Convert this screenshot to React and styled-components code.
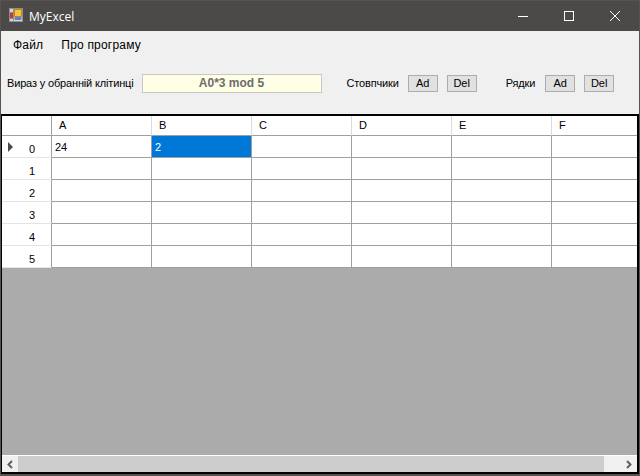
import React from "react";
import styled, { createGlobalStyle } from "styled-components";

const Global = createGlobalStyle`
  html, body { margin: 0; padding: 0; background: #000; }
  #root { width: 640px; height: 476px; overflow: hidden; }
  * { box-sizing: border-box; }
`;

const Win = styled.div`
  width: 640px;
  height: 476px;
  display: flex;
  flex-direction: column;
  background: #f0f0f0;
  border: 1px solid #57544f;
  border-bottom-width: 2px;
  font-family: "Liberation Sans", Arial, sans-serif;
  font-size: 11px;
  color: #000;
  overflow: hidden;
`;

const TitleBar = styled.div`
  height: 30px;
  flex: none;
  background: #4c4a48;
  display: flex;
  align-items: center;
  padding: 0 1px 0 8px;
  color: #fff;
  font-family: "Open Sans", "Noto Sans", sans-serif;
  font-size: 12px;
`;

const IconSvg = styled.svg`
  margin-bottom: 2px;
  flex: none;
`;

const Title = styled.span`
  margin-left: 6px;
  flex: 1;
`;

const WinBtn = styled.div`
  width: 46px;
  height: 30px;
  display: flex;
  align-items: center;
  justify-content: center;
`;

const Menu = styled.div`
  height: 27px;
  flex: none;
  display: flex;
  align-items: center;
  padding-left: 12px;
  gap: 18px;
  font-size: 12px;
  letter-spacing: 0.2px;
  background: #f0f0f0;
`;

const Toolbar = styled.div`
  height: 56px;
  flex: none;
  display: flex;
  align-items: flex-start;
  padding: 16px 0 0 6px;
`;

const Label = styled.span`
  line-height: 19px;
  font-size: 11px;
  letter-spacing: -0.16px;
  margin-left: ${(p) => p.$ml || 0}px;
`;

const ExprBox = styled.div`
  width: 180px;
  height: 19px;
  margin-left: 8px;
  background: #ffffe6;
  border: 1px solid #c8c8c8;
  color: #6d6d6d;
  font-weight: bold;
  font-size: 12px;
  text-align: center;
  line-height: 17px;
`;

const Btn = styled.button`
  width: 30px;
  height: 17px;
  padding: 0;
  margin: 1px 0 0 ${(p) => p.$ml}px;
  border: 1px solid #adadad;
  background: #e1e1e1;
  font: 11px "Liberation Sans", Arial, sans-serif;
  line-height: 15px;
  color: #000;
`;

const GridFrame = styled.div`
  flex: 1;
  min-height: 0;
  border: 1px solid #000;
  border-top-width: 2px;
  border-right-width: 2px;
  border-bottom-width: 2px;
  background: #ababab;
  display: flex;
  flex-direction: column;
`;

const GridArea = styled.div`
  flex: 1;
  min-height: 0;
  overflow: hidden;
`;

const Table = styled.div`
  display: grid;
  grid-template-columns: 50px repeat(6, 100px);
  grid-template-rows: 20px repeat(6, 22px);
  width: 650px;
`;

const HeadCell = styled.div`
  background: #fff;
  border-right: 1px solid ${(p) => (p.$corner ? "#a0a0a0" : "#dcdcdc")};
  border-bottom: 1px solid #a0a0a0;
  padding-left: 7px;
  line-height: 19px;
  color: #000;
`;

const RowHead = styled.div`
  position: relative;
  background: #fff;
  border-right: 1px solid #a0a0a0;
  border-bottom: 1px solid #e4e4e4;
  display: flex;
  align-items: center;
  justify-content: flex-end;
  padding: 4px 16px 0 0;
`;

const Arrow = styled.span`
  position: absolute;
  left: 6px;
  top: 6px;
  width: 0;
  height: 0;
  border-left: 5px solid #4a4a4a;
  border-top: 5px solid transparent;
  border-bottom: 5px solid transparent;
`;

const Cell = styled.div`
  background: ${(p) => (p.$sel ? "#0078d7" : "#fff")};
  color: ${(p) => (p.$sel ? "#fff" : "#000")};
  border-right: 1px solid #a0a0a0;
  border-bottom: 1px solid #a0a0a0;
  padding: 5px 0 0 3px;
  line-height: 13px;
`;

const HScroll = styled.div`
  height: 17px;
  flex: none;
  background: #f0f0f0;
  border-top: 1px solid #fff;
  display: flex;
  align-items: stretch;
`;

const ScrollBtn = styled.div`
  width: ${(p) => p.$w || 17}px;
  flex: none;
  display: flex;
  align-items: center;
  justify-content: center;
`;

const Thumb = styled.div`
  flex: 1;
  background: #cdcdcd;
`;

const Chevron = ({ right }) => (
  <svg width="8" height="9" viewBox="0 0 8 9">
    <path
      d={right ? "M2 1l3.5 3.5L2 8" : "M6 1L2.5 4.500L6 8"}
      fill="none"
      stroke="#606060"
      strokeWidth="2"
    />
  </svg>
);

const AppIcon = () => (
  <IconSvg width="14" height="14" viewBox="0 0 14 14">
    <rect x="0.5" y="0.5" width="13" height="13" fill="#d4d4d4" stroke="#8f8f8f" />
    <path d="M0 4.500h5M4.500 0v14M0 10.500h14" stroke="#8f8f8f" strokeWidth="1" />
    <rect x="5.500" y="1.500" width="7" height="7" fill="#f6c445" stroke="#c08a10" />
    <rect x="1" y="5" width="3" height="5" fill="#d8342c" />
    <rect x="6" y="9" width="6" height="3" fill="#4a86e0" />
  </IconSvg>
);

const cols = ["A", "B", "C", "D", "E", "F"];
const rows = [0, 1, 2, 3, 4, 5];

export default function App() {
  return (
    <Win>
      <Global />
      <TitleBar>
        <AppIcon />
        <Title>MyExcel</Title>
        <WinBtn>
          <svg width="12" height="12" viewBox="0 0 12 12">
            <path d="M1 6.500h10" stroke="#fff" />
          </svg>
        </WinBtn>
        <WinBtn>
          <svg width="12" height="12" viewBox="0 0 12 12">
            <rect x="1.500" y="1.500" width="9" height="9" fill="none" stroke="#fff" />
          </svg>
        </WinBtn>
        <WinBtn>
          <svg width="12" height="12" viewBox="0 0 12 12">
            <path d="M1 1l10 10M11 1L1 11" stroke="#fff" />
          </svg>
        </WinBtn>
      </TitleBar>
      <Menu>
        <span>Файл</span>
        <span>Про програму</span>
      </Menu>
      <Toolbar>
        <Label>Вираз у обранній клітинці</Label>
        <ExprBox>A0*3 mod 5</ExprBox>
        <Label $ml={25}>Стовпчики</Label>
        <Btn $ml={9}>Ad</Btn>
        <Btn $ml={9}>Del</Btn>
        <Label $ml={29}>Рядки</Label>
        <Btn $ml={10}>Ad</Btn>
        <Btn $ml={9}>Del</Btn>
      </Toolbar>
      <GridFrame>
        <GridArea>
          <Table>
            <HeadCell $corner />
            {cols.map((c) => (
              <HeadCell key={c}>{c}</HeadCell>
            ))}
            {rows.map((r) => (
              <React.Fragment key={r}>
                <RowHead>
                  {r === 0 && <Arrow />}
                  {r}
                </RowHead>
                {cols.map((c) => (
                  <Cell key={c} $sel={r === 0 && c === "B"}>
                    {r === 0 && c === "A" ? "24" : r === 0 && c === "B" ? "2" : ""}
                  </Cell>
                ))}
              </React.Fragment>
            ))}
          </Table>
        </GridArea>
        <HScroll>
          <ScrollBtn $w={16}>
            <Chevron />
          </ScrollBtn>
          <Thumb />
          <ScrollBtn $w={16} />
          <ScrollBtn>
            <Chevron right />
          </ScrollBtn>
        </HScroll>
      </GridFrame>
    </Win>
  );
}
